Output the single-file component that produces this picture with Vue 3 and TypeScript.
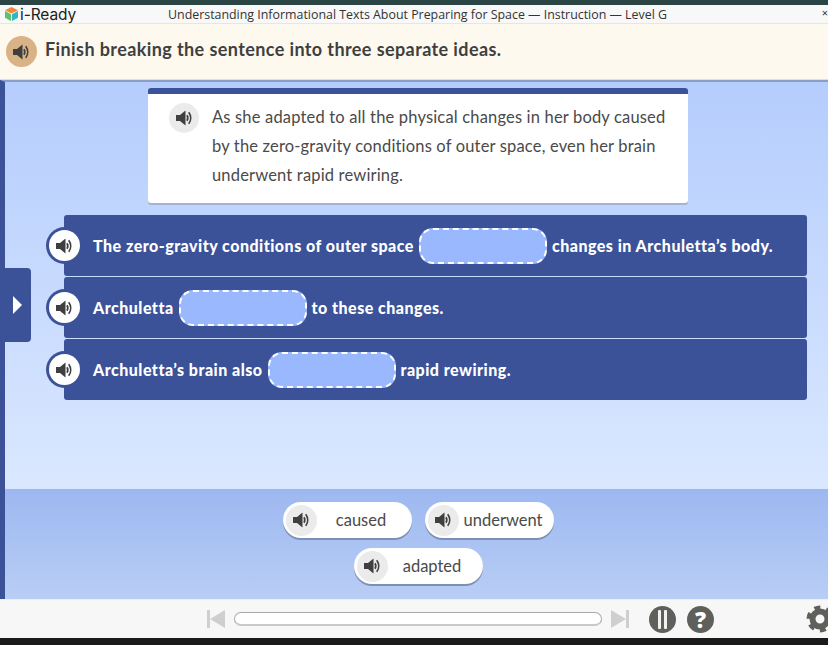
<template>
  <div class="page">
    <div class="top-strip" />

    <header class="title-bar">
      <div class="logo">
        <svg class="cube" width="13" height="14" viewBox="0 0 13 14">
          <path d="M6.5 0 13 3.2 6.5 6.6 0 3.2z" fill="#ef8a3a" />
          <path d="M0 4 6 7.2V14L0 10.8z" fill="#5cc26a" />
          <path d="M13 4 7 7.2V14l6-3.2z" fill="#35b4c9" />
        </svg>
        <span>i-Ready</span>
      </div>
      <div class="lesson-title">Understanding Informational Texts About Preparing for Space — Instruction — Level G</div>
      <span class="close">×</span>
    </header>

    <section class="instruction">
      <button class="audio audio-tan"><SpeakerIcon /></button>
      <h1>Finish breaking the sentence into three separate ideas.</h1>
    </section>

    <main class="stage">
      <div class="side-tab"><span class="tab-arrow" /></div>

      <div class="work">
        <div class="passage">
          <button class="audio audio-grey"><SpeakerIcon /></button>
          <p>As she adapted to all the physical changes in her body caused by the zero-gravity conditions of outer space, even her brain underwent rapid rewiring.</p>
        </div>

        <div class="rows">
          <div v-for="(row, i) in rows" :key="i" class="row">
            <button class="audio audio-row"><SpeakerIcon /></button>
            <span class="row-text">{{ row.before }}</span>
            <span class="blank" />
            <span class="row-text">{{ row.after }}</span>
          </div>
        </div>
      </div>

      <div class="tray">
        <div class="tray-line">
          <div class="chip">
            <button class="audio audio-chip"><SpeakerIcon /></button>
            <span>caused</span>
          </div>
          <div class="chip">
            <button class="audio audio-chip"><SpeakerIcon /></button>
            <span>underwent</span>
          </div>
        </div>
        <div class="tray-line">
          <div class="chip">
            <button class="audio audio-chip"><SpeakerIcon /></button>
            <span>adapted</span>
          </div>
        </div>
      </div>
    </main>

    <footer class="controls">
      <svg class="skip skip-back" width="18" height="20" viewBox="0 0 18 20">
        <path d="M0 1h3v18H0zM18 1v18L3 10z" fill="#cfcfcf" />
      </svg>
      <div class="progress" />
      <svg class="skip skip-next" width="18" height="20" viewBox="0 0 18 20">
        <path d="M18 1h-3v18h3zM0 1v18l15-9z" fill="#cfcfcf" />
      </svg>
      <button class="round-btn pause"><span /><span /></button>
      <button class="round-btn help">?</button>
      <svg class="gear" width="28" height="28" viewBox="0 0 28 28">
        <circle cx="14" cy="14" r="7.5" fill="none" stroke="#5f5f5c" stroke-width="6" />
        <circle cx="14" cy="14" r="11.5" fill="none" stroke="#5f5f5c" stroke-width="4" stroke-dasharray="6 6.04" />
      </svg>
    </footer>

    <div class="bottom-strip" />
  </div>
</template>

<script setup lang="ts">
import { defineComponent, h } from 'vue'

// 各ボタン共通のスピーカーアイコン
const SpeakerIcon = defineComponent({
  render() {
    return h('svg', { width: 17, height: 16, viewBox: '0 0 17 16', fill: 'none' }, [
      h('path', { d: 'M0 5h4l5.5-4.5v15L4 11H0z', fill: '#3f3f3f' }),
      h('path', { d: 'M11 5.2c1 1.7 1 3.9 0 5.6', stroke: '#3f3f3f', 'stroke-width': 1.7 }),
      h('path', { d: 'M12.7 2.2c2.6 3.4 2.6 8.2 0 11.6', stroke: '#3f3f3f', 'stroke-width': 1.7 }),
    ])
  },
})

const rows = [
  { before: 'The zero-gravity conditions of outer space', after: 'changes in Archuletta’s body.' },
  { before: 'Archuletta', after: 'to these changes.' },
  { before: 'Archuletta’s brain also', after: 'rapid rewiring.' },
]
</script>

<style scoped>
.page {
  display: flex;
  flex-direction: column;
  width: 828px;
  height: 645px;
  overflow: hidden;
  font-family: "Lato", "Noto Sans", sans-serif;
  color: #3f3f3f;
}

.top-strip { height: 5px; background: #2b4545; }
.bottom-strip { height: 7px; background: #1a1a1a; }

.title-bar {
  display: flex;
  align-items: center;
  height: 18px;
  padding-left: 5px;
  background: #f8f8f8;
  border-bottom: 1px solid #e8e6e0;
  position: relative;
}
.logo {
  display: flex;
  align-items: center;
  gap: 2px;
  width: 163px;
  font-family: "Inter", sans-serif;
  font-size: 15.5px;
  letter-spacing: -0.1px;
  color: #222;
}
.lesson-title {
  font-family: "Open Sans", sans-serif;
  font-size: 12.4px;
  font-weight: 500;
  color: #333;
  white-space: nowrap;
}
.close {
  position: absolute;
  right: 0;
  top: 0;
  font-family: "Open Sans", sans-serif;
  font-size: 11px;
  line-height: 16px;
  color: #333;
}

.instruction {
  display: flex;
  align-items: center;
  gap: 8px;
  height: 56px;
  padding-left: 6px;
  background: #fef9ef;
  box-sizing: border-box;
  border-bottom: 1px solid #e4dfd4;
}
.instruction h1 {
  margin: 0 0 5px;
  font-size: 18px;
  font-weight: 700;
  letter-spacing: 0.4px;
  color: #3f3f3f;
  white-space: nowrap;
}

.audio {
  display: grid;
  place-items: center;
  flex: none;
  padding: 0;
  border: 0;
  border-radius: 50%;
}
.audio-tan { width: 31px; height: 31px; background: #d9b285; }
.audio-grey { width: 30px; height: 30px; background: #ebebeb; }
.audio-chip { width: 31px; height: 31px; background: #ebebeb; }
.audio-row {
  width: 31px;
  height: 31px;
  margin-left: -15px;
  margin-right: 13px;
  background: #fff;
  box-shadow: 0 0 0 3px #3b5299;
}

.stage {
  position: relative;
  flex: 1;
  display: flex;
  flex-direction: column;
  min-height: 0;
  border-top: 2px solid #8c9ec4;
  border-left: 5px solid #3b5299;
}

.side-tab {
  position: absolute;
  left: -5px;
  top: 186px;
  display: flex;
  align-items: center;
  width: 31px;
  height: 74px;
  padding-left: 13px;
  box-sizing: border-box;
  background: #3b5299;
  border-radius: 0 4px 4px 0;
}
.tab-arrow {
  border-left: 9px solid #fff;
  border-top: 9px solid transparent;
  border-bottom: 9px solid transparent;
}

.work {
  flex: 1;
  min-height: 0;
  padding-top: 6px;
  background: linear-gradient(#b5cdfd, #dae8ff);
}

.passage {
  display: flex;
  align-items: flex-start;
  gap: 13px;
  width: 540px;
  height: 115px;
  margin-left: 143px;
  padding: 9px 20px 0 21px;
  box-sizing: border-box;
  background: #fff;
  border-top: 6px solid #3b5299;
  border-radius: 3px;
  box-shadow: 0 2px 0 #a4b3cf;
}
.passage p {
  margin: 0;
  font-size: 16.5px;
  letter-spacing: 0.17px;
  line-height: 29px;
  color: #4a4a4a;
}

.rows {
  display: flex;
  flex-direction: column;
  gap: 1px;
  margin: 12px 0 0 59px;
  width: 743px;
}
.row {
  display: flex;
  align-items: center;
  height: 61px;
  background: #3b5299;
  border-radius: 3px;
}
.row-text {
  margin-bottom: 1px;
  font-size: 16px;
  font-weight: 900;
  letter-spacing: 0.48px;
  color: #fff;
  white-space: nowrap;
}
.blank {
  width: 128px;
  height: 36px;
  margin: 0 5px;
  box-sizing: border-box;
  background: #9ab8fd;
  border: 2px dashed #fff;
  border-radius: 14px;
}

.tray {
  display: flex;
  flex-direction: column;
  gap: 10px;
  height: 110px;
  padding: 13px 0 0 4px;
  box-sizing: border-box;
  background: linear-gradient(#9db8f1, #b9cef5);
}
.tray-line {
  display: flex;
  justify-content: center;
  gap: 13px;
}
.chip {
  display: flex;
  align-items: center;
  width: 129px;
  height: 36px;
  padding: 0 7px 0 3px;
  box-sizing: border-box;
  background: #fff;
  border-radius: 18px;
  box-shadow: 0 2px 0 #7d8fb4;
  font-size: 16.5px;
  color: #4a4a4a;
}
.chip span { flex: 1; text-align: center; }

.controls {
  position: relative;
  display: flex;
  align-items: center;
  height: 39px;
  padding-left: 207px;
  box-sizing: border-box;
  background: #f7f7f7;
  border-top: 1px solid #eee;
}
.skip { flex: none; }
.progress {
  width: 368px;
  height: 14px;
  margin: 0 9px;
  box-sizing: border-box;
  background: #fff;
  border: 1px solid #a9a9a9;
  border-bottom: 2px solid #c9c9c9;
  border-radius: 8px;
}
.round-btn {
  display: flex;
  align-items: center;
  justify-content: center;
  flex: none;
  width: 27px;
  height: 27px;
  padding: 0;
  border: 0;
  border-radius: 50%;
  background: #5f5f5c;
  color: #fff;
}
.pause { gap: 3px; margin-left: 20px; }
.pause span { width: 3px; height: 19px; background: #f2f2f2; border-radius: 1px; }
.help {
  margin-left: 11px;
  font-family: "Open Sans", sans-serif;
  font-size: 22px;
  font-weight: 800;
  line-height: 27px;
}
.gear {
  position: absolute;
  left: 806px;
  top: 5px;
}
</style>
